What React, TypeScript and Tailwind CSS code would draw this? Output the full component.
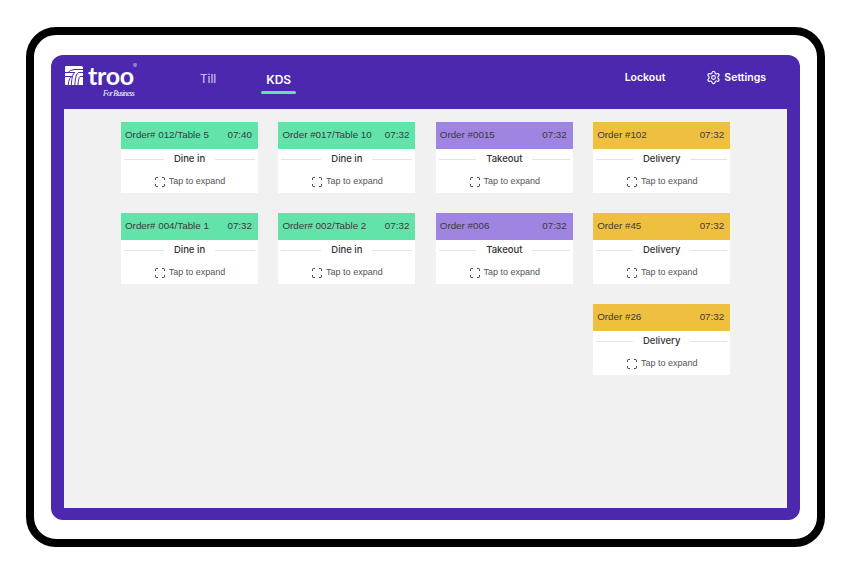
import { Scan, Settings } from 'lucide-react';

type Order = { label: string; time: string; kind: 'Dine in' | 'Takeout' | 'Delivery' } | null;

const orders: Order[] = [
  { label: 'Order# 012/Table 5', time: '07:40', kind: 'Dine in' },
  { label: 'Order #017/Table 10', time: '07:32', kind: 'Dine in' },
  { label: 'Order #0015', time: '07:32', kind: 'Takeout' },
  { label: 'Order #102', time: '07:32', kind: 'Delivery' },
  { label: 'Order# 004/Table 1', time: '07:32', kind: 'Dine in' },
  { label: 'Order# 002/Table 2', time: '07:32', kind: 'Dine in' },
  { label: 'Order #006', time: '07:32', kind: 'Takeout' },
  { label: 'Order #45', time: '07:32', kind: 'Delivery' },
  null,
  null,
  null,
  { label: 'Order #26', time: '07:32', kind: 'Delivery' },
];

const headerColors = {
  'Dine in': 'bg-[#61e3aa]',
  Takeout: 'bg-[#9f84e2]',
  Delivery: 'bg-[#efbf3f]',
};

function Logo() {
  return (
    <div className="relative w-[72px] h-[38px]">
      <div className="flex items-center gap-[5px]">
        <svg width="18" height="19" viewBox="0 0 18 19" className="shrink-0">
          <path d="M1 0H16.5Q18 0 18 1.5V19H1Q0 19 0 18V1Q0 0 1 0Z" fill="#fff" />
          <path d="M0 6.5H10Q7 7 6.3 19M0 10.5H7Q4 11 3.2 19M18 3.5H9Q5 4 3 6.5" fill="none" stroke="#4b28ae" strokeWidth="1" />
          <path d="M18 6.5H13.5Q10.5 7.5 9.8 19M18 10.5H15Q13.5 11.5 13 19" fill="none" stroke="#4b28ae" strokeWidth="1" />
        </svg>
        <span className="font-['Lato',sans-serif] font-bold text-[25px] leading-[19px] tracking-[-0.3px] text-white">troo</span>
      </div>
      <span className="absolute left-[68px] top-[-3px] text-[6px] leading-none font-normal text-white/70">®</span>
      <span className="absolute left-[38px] top-[23px] font-['Liberation_Serif',serif] italic font-normal text-[7.5px] leading-[10px] tracking-[-0.7px] whitespace-nowrap text-white">For Business</span>
    </div>
  );
}

function OrderCard({ order }: { order: NonNullable<Order> }) {
  return (
    <div className="bg-white h-[71px] font-['Liberation_Sans',sans-serif]">
      <div className={`h-[27px] flex items-center justify-between pl-[4px] pr-[6px] text-[9.8px] whitespace-nowrap text-[#3b3b3b] ${headerColors[order.kind]}`}>
        <span>{order.label}</span>
        <span>{order.time}</span>
      </div>
      <div className="flex items-center gap-[10px] px-[3px] mt-[2px] h-[16px]">
        <div className="flex-1 h-px bg-[#e3e3e3]" />
        <span className="font-['Inter',sans-serif] text-[9.5px] font-medium text-[#333]">{order.kind}</span>
        <div className="flex-1 h-px bg-[#e3e3e3]" />
      </div>
      <div className="flex items-center justify-center gap-[3px] mt-[8px] text-[9px] text-[#555]">
        <Scan size={12} strokeWidth={2} color="#333" />
        <span>Tap to expand</span>
      </div>
    </div>
  );
}

export default function App() {
  return (
    <div className="w-[850px] h-[575px] bg-white pt-[27px] pl-[26px] overflow-hidden">
      <div className="w-[799px] h-[520px] border-[8px] border-black rounded-[30px] pl-[17px] pt-[20px]">
        <div className="w-[749px] h-[465px] bg-[#4b28ae] rounded-[12px] px-[13px] pb-[12px] flex flex-col">
          {/* Top bar */}
          <div className="h-[54px] shrink-0 flex items-start text-white font-['Inter',sans-serif] font-semibold">
            <div className="mt-[11px] ml-[1px]">
              <Logo />
            </div>
            <span className="ml-[63px] mt-[16px] text-[11.5px] text-white/70 font-medium">Till</span>
            <div className="ml-[45px] mt-[17px] flex flex-col items-center w-[35px]">
              <span className="text-[12px] leading-[16px]">KDS</span>
              <div className="mt-[3px] h-[2.5px] w-full bg-[#61e3aa] rounded-full" />
            </div>
            <span className="ml-auto mt-[15px] text-[10.5px]">Lockout</span>
            <div className="ml-[41px] mr-[21px] mt-[15px] flex items-center gap-[3px] text-[10.5px]">
              <Settings size={15} strokeWidth={1.75} />
              <span>Settings</span>
            </div>
          </div>
          {/* Orders */}
          <div className="flex-1 bg-[#f1f1f1] pl-[57px] pt-[13px]">
            <div className="grid grid-cols-[repeat(4,137px)] gap-x-[20.4px] gap-y-[20px]">
              {orders.map((order, i) => (order ? <OrderCard key={i} order={order} /> : <div key={i} />))}
            </div>
          </div>
        </div>
      </div>
    </div>
  );
}
